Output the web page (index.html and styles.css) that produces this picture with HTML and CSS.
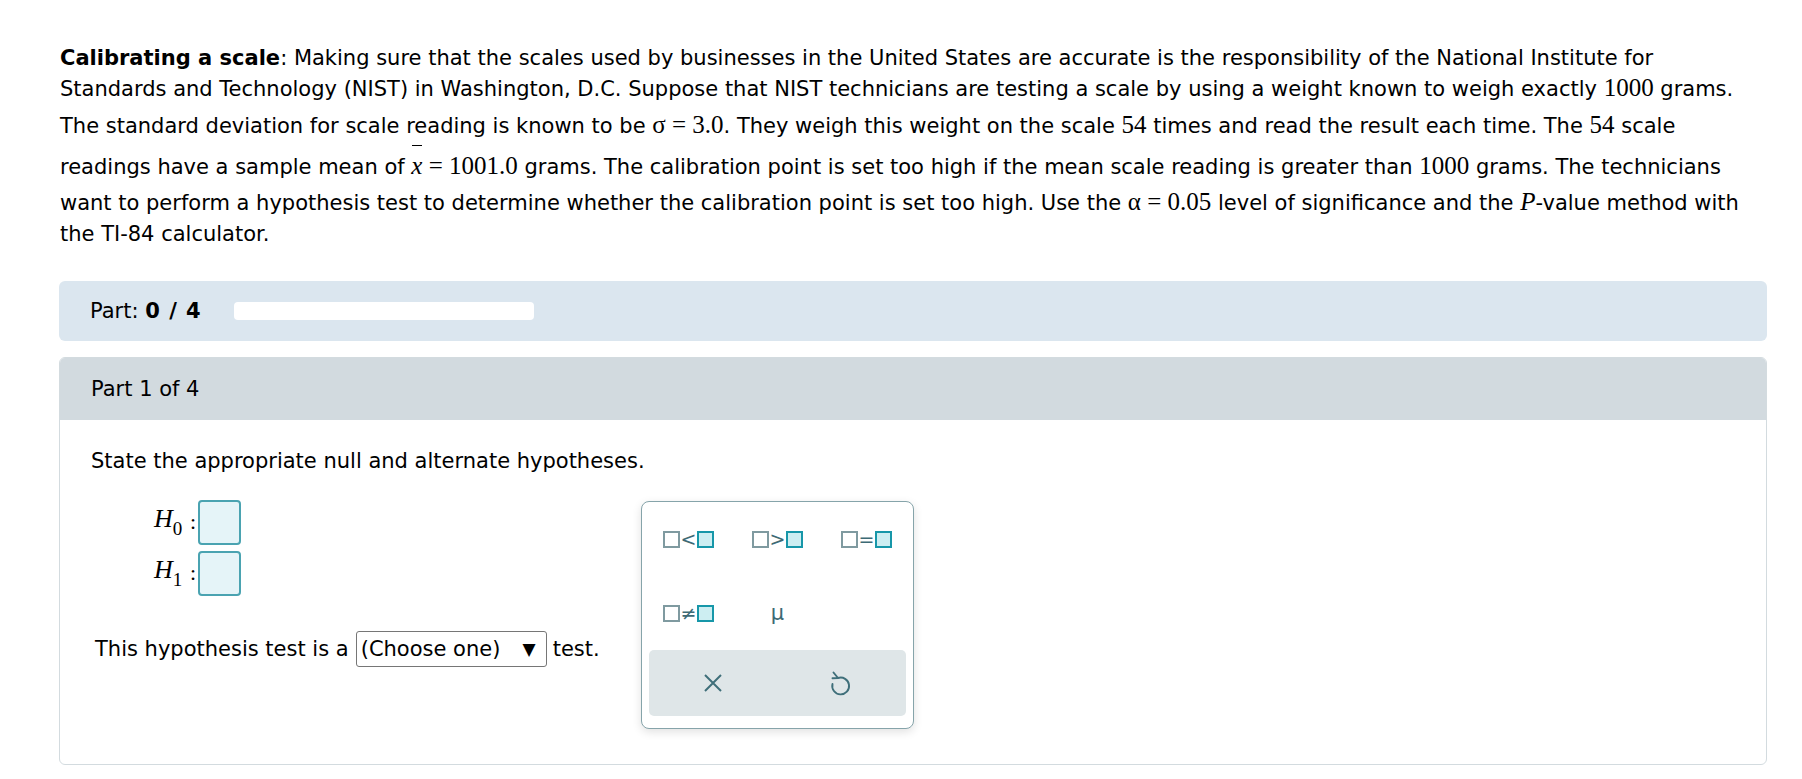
FILE: index.html
```html
<!DOCTYPE html>
<html>
<head>
<meta charset="utf-8">
<link rel="stylesheet" href="styles.css">
</head>
<body>
<div class="page">
  <p class="question"><b>Calibrating a scale</b>: Making sure that the scales used by businesses in the United States are accurate is the responsibility of the National Institute for Standards and Technology (NIST) in Washington, D.C. Suppose that NIST technicians are testing a scale by using a weight known to weigh exactly <span class="m">1000</span> grams. The standard deviation for scale reading is known to be <span class="m tall">σ = 3.0</span>. They weigh this weight on the scale <span class="m">54</span> times and read the result each time. The <span class="m">54</span> scale readings have a sample mean of <span class="m taller"><span class="xbar">x</span> = 1001.0</span> grams. The calibration point is set too high if the mean scale reading is greater than <span class="m">1000</span> grams. The technicians want to perform a hypothesis test to determine whether the calibration point is set too high. Use the <span class="m">α = 0.05</span> level of significance and the <span class="m"><i>P</i></span>-value method with the TI-84 calculator.</p>

  <div class="progress">
    <span>Part: <b class="frac">0 / 4</b></span>
    <div class="track"></div>
  </div>

  <div class="card">
    <div class="card-head">Part 1 of 4</div>
    <div class="card-body">
      <p class="prompt">State the appropriate null and alternate hypotheses.</p>
      <div class="hyp">
        <div class="hrow"><span class="hl"><i>H</i><sub>0</sub></span><span class="colon">:</span><span class="ansbox"></span></div>
        <div class="hrow"><span class="hl"><i>H</i><sub>1</sub></span><span class="colon">:</span><span class="ansbox"></span></div>
      </div>
      <div class="testrow">This hypothesis test is a <span class="select">(Choose one) <span class="tri">▼</span></span> test.</div>

      <div class="palette">
        <div class="pgrid">
          <span class="pitem"><span class="sq"></span><span class="op">&lt;</span><span class="sq t"></span></span>
          <span class="pitem"><span class="sq"></span><span class="op">&gt;</span><span class="sq t"></span></span>
          <span class="pitem"><span class="sq"></span><span class="op">=</span><span class="sq t"></span></span>
          <span class="pitem"><span class="sq"></span><span class="op">≠</span><span class="sq t"></span></span>
          <span class="pitem mu">μ</span>
          <span class="pitem"></span>
        </div>
        <div class="pbar">
          <svg width="20" height="20" viewBox="0 0 20 20"><path d="M2 2 L18 18 M18 2 L2 18" stroke="#3f6f7a" stroke-width="2" fill="none"/></svg>
          <svg width="22" height="25" viewBox="0 0 22 25"><path d="M3.5 1.5 L8 7 L2.5 7.2 M8 7 A8.4 8.4 0 1 1 2.5 13" stroke="#3f6f7a" stroke-width="1.9" fill="none" stroke-linecap="round" stroke-linejoin="round"/></svg>
        </div>
      </div>
    </div>
  </div>
</div>
</body>
</html>
```
FILE: styles.css
```css
html, body { margin: 0; padding: 0; background: #fff; }
body { font-family: "DejaVu Sans", Verdana, sans-serif; font-size: 21px; color: #000; }
.page { padding: 43px 35px 0 59px; }
.question { margin: 0; line-height: 31px; padding: 0 10px 0 1px; }
.m { font-family: "Liberation Serif", "Times New Roman", serif; font-size: 25px; line-height: 1; }
.m.tall { display: inline-block; padding-top: 7px; }
.m.taller { display: inline-block; padding-top: 11px; padding-bottom: 10px; }
.xbar { display: inline-block; position: relative; font-style: italic; line-height: 1; }
.xbar::before { content: ""; position: absolute; left: 1px; right: 0; top: -8px; border-top: 1.5px solid #000; }
.progress { margin-top: 31px; height: 60px; background: #dbe6ef; border-radius: 6px; display: flex; align-items: center; padding-left: 31px; }
.frac { word-spacing: 2px; }
.track { width: 300px; height: 18px; background: #fff; border-radius: 4px; margin-left: 33px; }
.card { margin-top: 16px; border: 1px solid #d3dbdf; border-radius: 6px; height: 406px; position: relative; }
.card-head { height: 62px; background: #d2dadf; display: flex; align-items: center; padding-left: 31px; border-radius: 5px 5px 0 0; }
.card-body { padding: 28px 0 0 31px; }
.prompt { margin: 0; line-height: 26px; }
.hyp { margin-top: 26px; margin-left: 63px; display: flex; flex-direction: column; gap: 7px; }
.hrow { display: flex; align-items: center; height: 44px; }
.hl { font-family: "Liberation Serif", serif; font-size: 26px; width: 36px; }
.hl sub { font-size: 19px; vertical-align: -8px; }
.colon { font-family: "Liberation Serif", serif; font-size: 22px; margin-right: 2px; }
.ansbox { width: 39px; height: 41px; border: 2px solid #4aa3b1; border-radius: 4px; background: #e5f4f8; }
.testrow { margin-top: 36px; margin-left: 4px; display: flex; align-items: center; }
.select { display: inline-flex; align-items: center; justify-content: space-between; box-sizing: border-box; width: 191px; height: 36px; border: 1px solid #767676; border-radius: 3px; padding: 0 10px 0 4px; margin: 0 6px 0 7px; }
.tri { font-size: 17px; }
.palette { position: absolute; left: 581px; top: 143px; width: 271px; height: 226px; border: 1px solid #86a4aa; border-radius: 8px; background: #fff; box-shadow: 0 3px 10px rgba(0,0,0,0.12); }
.pgrid { display: grid; grid-template-columns: repeat(3, 1fr); grid-template-rows: 74px 74px; padding: 0 2px; }
.pitem { display: flex; align-items: center; justify-content: center; }
.sq { width: 13px; height: 13px; border: 2px solid #7f9aa0; }
.sq.t { border-color: #1797a9; background: #cdeef2; }
.op { font-family: "DejaVu Sans", sans-serif; color: #3d6a75; font-size: 19px; margin: 0 1px; line-height: 1; }
.mu { font-family: "DejaVu Sans", sans-serif; font-size: 21px; color: #3d6a75; }
.pbar { margin: 0 7px; height: 66px; background: #dfe6e8; border-radius: 5px; display: flex; align-items: center; justify-content: space-around; }
```
